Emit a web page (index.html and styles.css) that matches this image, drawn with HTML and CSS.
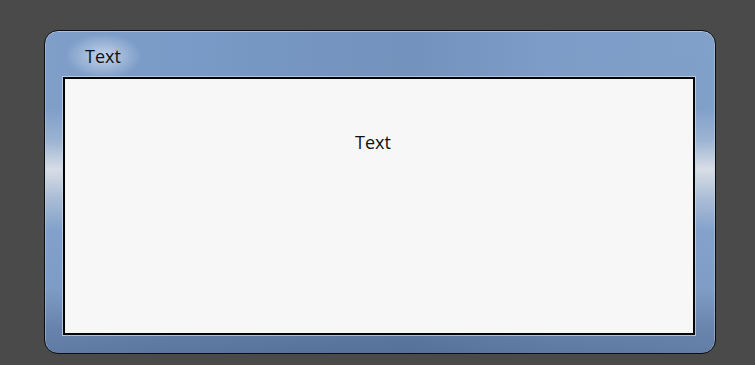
FILE: index.html
```html
<!DOCTYPE html>
<html lang="en">
<head>
  <meta charset="UTF-8">
  <title>Window</title>
  <link rel="stylesheet" href="styles.css">
</head>
<body>
  <div class="window">
    <div class="titlebar">
      <span class="title">Text</span>
    </div>
    <div class="panel">
      <p class="label">Text</p>
    </div>
  </div>
</body>
</html>
```

FILE: styles.css
```css
body {
  margin: 0;
  background: #4a4a4a;
  padding: 30px 0 0 44px;
  font-family: "Open Sans", "Noto Sans", sans-serif;
}
.window {
  width: 670px;
  height: 322px;
  border: 1px solid #0d0d0d;
  border-radius: 14px;
  box-sizing: content-box;
  display: flex;
  flex-direction: column;
  background:
    linear-gradient(90deg, rgba(255,255,255,0.04) 0%, rgba(0,0,0,0) 20%, rgba(20,40,70,0.05) 40%, rgba(20,40,70,0.07) 55%, rgba(255,255,255,0.02) 75%, rgba(255,255,255,0.05) 100%),
    linear-gradient(180deg, #7a9bc7 0%, #7a9bc6 24%, #98b0d0 34%, #d6dce5 43%, #a7bad4 52%, #7d9dc9 62%, #7898c3 80%, #637fa8 92%, #5a76a0 100%);
  box-shadow: inset 0 1px 0 rgba(200,215,235,0.6), inset 1px 0 0 rgba(200,215,235,0.4), inset -1px 0 0 rgba(200,215,235,0.4);
}
.titlebar {
  height: 46px;
  padding-left: 21px;
  display: flex;
  align-items: center;
}
.title {
  font-size: 18px;
  color: #111;
  padding: 10px 20px 10px 19px;
  margin-top: 4px;
  background: radial-gradient(ellipse at center, rgba(225,235,248,0.7) 0%, rgba(200,215,235,0.35) 45%, rgba(160,185,215,0) 72%);
}
.panel {
  margin: 0 20px 0 18px;
  height: 254px;
  border: 2px solid #050505;
  background: #f7f7f7;
  box-shadow: 0 0 0 1px rgba(205,220,240,0.7);
  text-align: center;
  padding-right: 12px;
}
.label {
  margin: 51px 0 0;
  font-size: 18px;
  color: #111;
}
```
